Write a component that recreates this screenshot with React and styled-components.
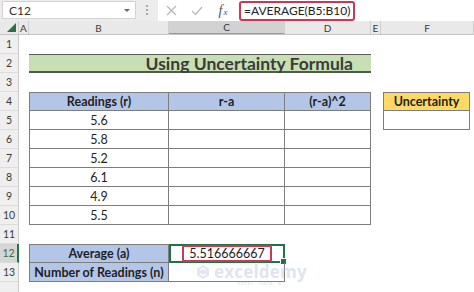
import styled, { createGlobalStyle } from "styled-components";

const GlobalStyle = createGlobalStyle`
  html, body { margin: 0; padding: 0; background: #fff; }
  body { font-family: Lato, "Open Sans", sans-serif; color: #1e1e1e; }
`;

const COLS = "19px 10px 140px 116px 86px 10px 93px";
const LINE = "#7d7d7d";

const Frame = styled.div`
  width: 474px;
  height: 292px;
  overflow: hidden;
  display: flex;
  flex-direction: column;
  background: #fff;
`;

const Toolbar = styled.div`
  height: 27px;
  background: #ececec;
  display: flex;
  align-items: flex-start;
`;

const NameBox = styled.div`
  margin: 1px 0 0 2px;
  width: 134px;
  height: 18px;
  box-sizing: border-box;
  border: 1px solid #d3d3d3;
  background: #fff;
  display: flex;
  align-items: center;
  justify-content: space-between;
  padding: 0 5px 0 6px;
  font-size: 12px;
  color: #333;
`;

const Caret = styled.span`
  width: 0;
  height: 0;
  border-left: 3px solid transparent;
  border-right: 3px solid transparent;
  border-top: 3px solid #666;
`;

const Dots = styled.div`
  width: 22px;
  height: 20px;
  display: flex;
  flex-direction: column;
  align-items: center;
  justify-content: center;
  gap: 2px;
  span {
    width: 2px;
    height: 2px;
    background: #a8a8a8;
  }
`;

const FormulaArea = styled.div`
  flex: 1;
  height: 21px;
  background: #fff;
  display: flex;
  align-items: center;
`;

const IconSlot = styled.div`
  width: 26px;
  height: 21px;
  display: flex;
  align-items: center;
  justify-content: center;
  color: #b5b5b5;
`;

const Fx = styled.span`
  font-family: "Liberation Serif", serif;
  font-style: italic;
  font-size: 14px;
  color: #555;
  sub {
    font-size: 9px;
    vertical-align: baseline;
    margin-left: 1px;
  }
`;

const FormulaText = styled.div`
  margin-left: 3px;
  height: 20px;
  box-sizing: border-box;
  border: 2px solid #c7385b;
  border-radius: 3px;
  padding: 0 3px 0 3px;
  display: flex;
  align-items: center;
  font-size: 12px;
  color: #222;
`;

const HeaderRow = styled.div`
  display: grid;
  grid-template-columns: ${COLS};
  height: 13px;
  background: #e9e9e9;
  border-bottom: 1px solid #c4c4c4;
`;

const ColHead = styled.div`
  box-sizing: border-box;
  border-right: 1px solid #d0d0d0;
  display: flex;
  align-items: center;
  justify-content: center;
  font-size: 10px;
  color: #3a3a3a;
  background: ${(p) => (p.$active ? "#d2d2d2" : "transparent")};
  border-bottom: ${(p) => (p.$active ? "1px solid #9a9a9a" : "none")};
`;

const Corner = styled(ColHead)`
  align-items: flex-end;
  justify-content: flex-end;
  padding: 0 2px 2px 0;
`;

const Sheet = styled.div`
  display: grid;
  grid-template-columns: ${COLS};
  grid-auto-rows: 19px;
`;

const RowHead = styled.div`
  box-sizing: border-box;
  background: ${(p) => (p.$active ? "#d6d6d6" : "#efefef")};
  border-right: ${(p) => (p.$active ? "2px solid #217346" : "1px solid #c9c9c9")};
  border-bottom: 1px solid #dcdcdc;
  display: flex;
  align-items: center;
  justify-content: center;
  font-size: 10.5px;
  color: ${(p) => (p.$active ? "#3f6a4e" : "#3a3a3a")};
`;

const Cell = styled.div`
  box-sizing: border-box;
  min-width: 0;
  display: flex;
  align-items: center;
  justify-content: center;
  white-space: nowrap;
  font-size: 12.5px;
  font-weight: ${(p) => (p.$bold ? 700 : 400)};
  background: ${(p) => p.$bg || "transparent"};
  border-top: ${(p) => (p.$t ? `1px solid ${LINE}` : "none")};
  border-left: ${(p) => (p.$l ? `1px solid ${LINE}` : "none")};
  border-right: ${(p) => (p.$r ? `1px solid ${LINE}` : "none")};
  border-bottom: ${(p) => (p.$b ? `1px solid ${LINE}` : "none")};
  margin: ${(p) => p.$inset || "0"};
  position: relative;
`;

const TitleCell = styled.div`
  grid-column: span 3;
  box-sizing: border-box;
  background: #c6e0b4;
  border-top: 1px solid #5b5b5b;
  border-bottom: 2px solid #4e5a4c;
  display: flex;
  align-items: center;
  justify-content: flex-end;
  padding-right: 18px;
  font-size: 17.5px;
  font-weight: 700;
  color: #3b3b3b;
`;

const Selected = styled(Cell)`
  border: 2px solid #217346;
  align-items: flex-start;
`;

const FillHandle = styled.span`
  position: absolute;
  right: -4px;
  bottom: -4px;
  width: 5px;
  height: 5px;
  background: #217346;
  border: 1px solid #fff;
`;

const Callout = styled.div`
  width: 90px;
  height: 17px;
  margin-top: -1px;
  box-sizing: border-box;
  border: 2px solid #c7385b;
  border-radius: 2px;
  display: flex;
  align-items: center;
  justify-content: center;
  font-size: 12.5px;
`;

const Watermark = styled.div`
  position: absolute;
  left: 26px;
  top: 1px;
  display: flex;
  align-items: flex-start;
  gap: 3px;
  opacity: 0.45;
  pointer-events: none;
`;

const MarkText = styled.div`
  display: flex;
  flex-direction: column;
  align-items: center;
  b {
    display: block;
    font-family: "Open Sans", sans-serif;
    font-size: 17px;
    line-height: 15px;
    font-weight: 700;
    color: #b9c6dc;
    letter-spacing: 0.2px;
  }
  small {
    display: block;
    font-size: 4.5px;
    line-height: 5px;
    color: #b0b8c8;
    letter-spacing: 0.6px;
    margin-top: 2px;
  }
`;

const readings = ["5.6", "5.8", "5.2", "6.1", "4.9", "5.5"];

function CloseIcon() {
  return (
    <svg width="11" height="11" viewBox="0 0 11 11">
      <path d="M1 1 L10 10 M10 1 L1 10" stroke="#b8b8b8" strokeWidth="1.3" />
    </svg>
  );
}

function CheckIcon() {
  return (
    <svg width="12" height="10" viewBox="0 0 12 10">
      <path d="M1 5 L4.5 8.5 L11 1" stroke="#b8b8b8" strokeWidth="1.3" fill="none" />
    </svg>
  );
}

function MarkIcon() {
  return (
    <svg width="16" height="16" viewBox="0 0 16 16">
      <path d="M8 1 L14 4.5 L14 11.5 L8 15 L2 11.5 L2 4.5 Z" fill="#c3cde0" />
      <path d="M5 6 L8 4.5 L11 6 M5 10 L8 11.5 L11 10" stroke="#fff" strokeWidth="1.2" fill="none" />
    </svg>
  );
}

function EmptyRow({ n }) {
  return (
    <>
      <RowHead>{n}</RowHead>
      <Cell />
      <Cell />
      <Cell />
      <Cell />
      <Cell />
      <Cell />
    </>
  );
}

function Row({ n, value, first }) {
  return (
    <>
      <RowHead>{n}</RowHead>
      <Cell />
      <Cell $l $r $b>
        {value}
      </Cell>
      <Cell $r $b />
      <Cell $r $b />
      <Cell />
      {first ? <Cell $l $r $b $inset="0 4px 0 2px" /> : <Cell />}
    </>
  );
}

export default function App() {
  return (
    <Frame>
      <GlobalStyle />
      <Toolbar>
        <NameBox>
          C12
          <Caret />
        </NameBox>
        <Dots>
          <span />
          <span />
          <span />
        </Dots>
        <FormulaArea>
          <IconSlot>
            <CloseIcon />
          </IconSlot>
          <IconSlot>
            <CheckIcon />
          </IconSlot>
          <IconSlot>
            <Fx>
              f<sub>x</sub>
            </Fx>
          </IconSlot>
          <FormulaText>=AVERAGE(B5:B10)</FormulaText>
        </FormulaArea>
      </Toolbar>

      <HeaderRow>
        <Corner>
          <svg width="9" height="9" viewBox="0 0 9 9">
            <path d="M9 0 L9 9 L0 9 Z" fill="#2f6f45" />
          </svg>
        </Corner>
        <ColHead>A</ColHead>
        <ColHead>B</ColHead>
        <ColHead $active>C</ColHead>
        <ColHead>D</ColHead>
        <ColHead>E</ColHead>
        <ColHead>F</ColHead>
      </HeaderRow>

      <Sheet>
        <EmptyRow n={1} />

        <RowHead>2</RowHead>
        <Cell />
        <TitleCell>Using Uncertainty Formula</TitleCell>
        <Cell />
        <Cell />

        <EmptyRow n={3} />

        <RowHead>4</RowHead>
        <Cell />
        <Cell $bg="#b4c6e7" $bold $t $l $r $b>
          Readings (r)
        </Cell>
        <Cell $bg="#b4c6e7" $bold $t $r $b>
          r-a
        </Cell>
        <Cell $bg="#b4c6e7" $bold $t $r $b>
          (r-a)^2
        </Cell>
        <Cell />
        <Cell $bg="#ffd966" $bold $t $l $r $b $inset="0 4px 0 2px">
          Uncertainty
        </Cell>

        {readings.map((v, i) => (
          <Row key={v + i} n={i + 5} value={v} first={i === 0} />
        ))}

        <EmptyRow n={11} />

        <RowHead $active>12</RowHead>
        <Cell />
        <Cell $bg="#b4c6e7" $bold $t $l $r $b>
          Average (a)
        </Cell>
        <Selected>
          <Callout>5.516666667</Callout>
          <FillHandle />
        </Selected>
        <Cell />
        <Cell />
        <Cell />

        <RowHead>13</RowHead>
        <Cell />
        <Cell $bg="#b4c6e7" $bold $l $r $b>
          Number of Readings (n)
        </Cell>
        <Cell $r $b>
          <Watermark>
            <MarkIcon />
            <MarkText>
              <b>exceldemy</b>
              <small>EXCEL · DATA · BI</small>
            </MarkText>
          </Watermark>
        </Cell>
        <Cell />
        <Cell />
        <Cell />

        <EmptyRow n="" />
      </Sheet>
    </Frame>
  );
}
